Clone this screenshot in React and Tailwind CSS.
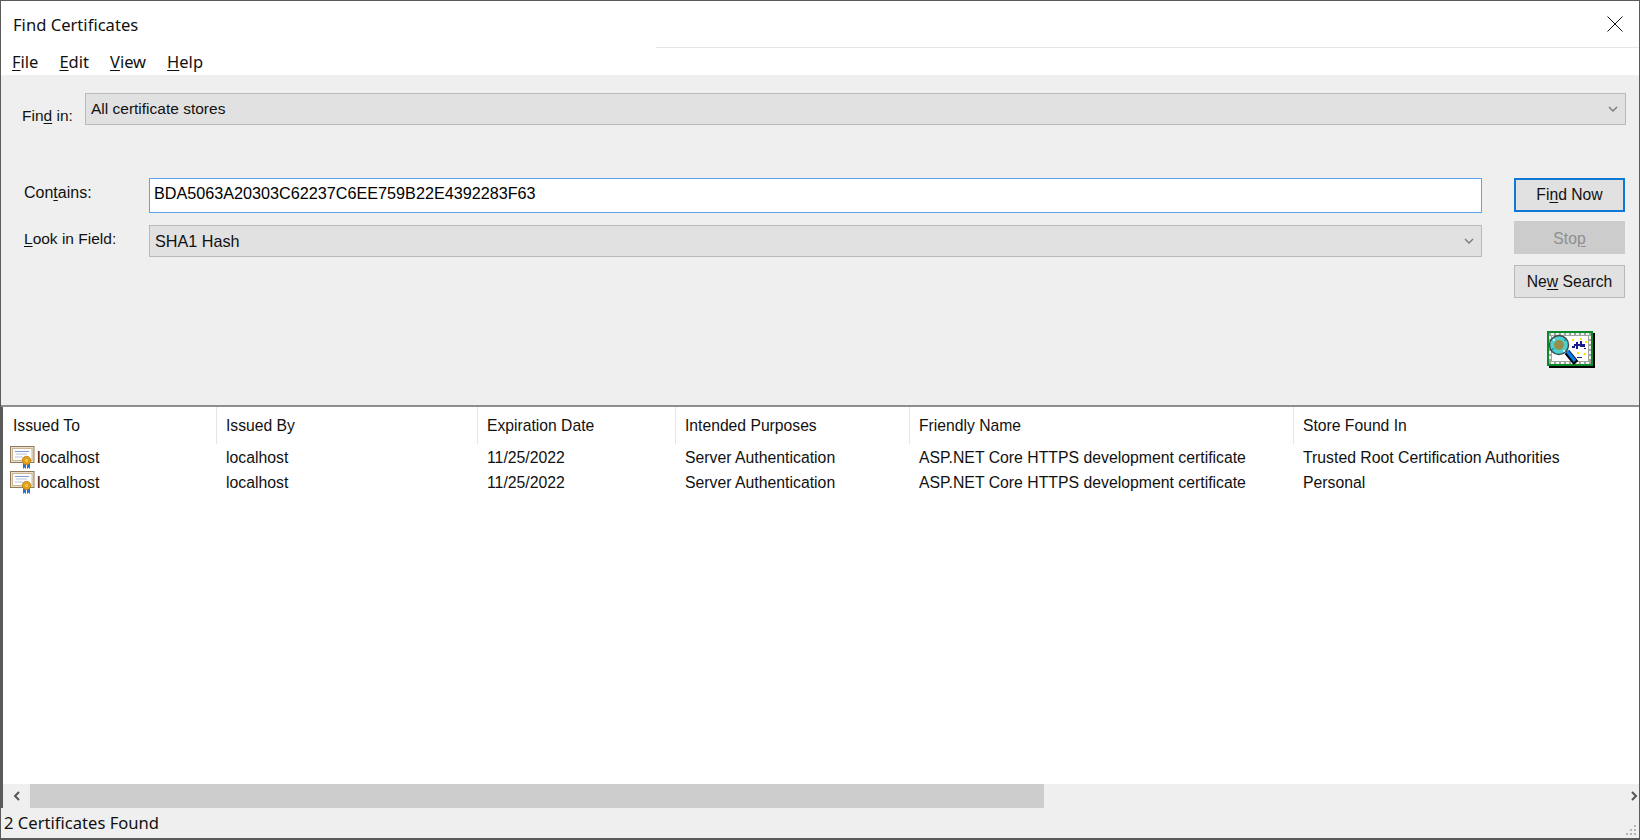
import React from "react";

const seg = "font-['Noto_Sans','Open_Sans',sans-serif]";
const ari = "font-['Liberation_Sans',Arial,sans-serif]";

function Chevron({ className }) {
  return (
    <svg width="10" height="7" viewBox="0 0 10 7" className={className} fill="none" stroke="#777" strokeWidth="1.3">
      <path d="M1 1 L5 5 L9 1" />
    </svg>
  );
}

function CertIcon() {
  return (
    <svg width="25" height="23" viewBox="0 0 25 23" className="shrink-0">
      <rect x="0.5" y="0.5" width="23.5" height="16" fill="#e9dfcc" stroke="#8f7b5c" />
      <rect x="2.5" y="2.5" width="19.5" height="12" fill="#fdfdfd" stroke="#c9b794" strokeWidth="1" />
      <path d="M5 5.5 H19" stroke="#7f9bc9" strokeWidth="1" />
      <path d="M6 8 H17" stroke="#b6c4da" strokeWidth="1" />
      <path d="M5 11 H13" stroke="#b6c4da" strokeWidth="1" />
      <path d="M13 17 h3 v6 l-1.5 -1.5 l-1.5 1.5 z M17 17 h3 v6 l-1.5 -1.5 l-1.5 1.5 z" fill="#2a6fd6" />
      <circle cx="16.5" cy="14.5" r="4.2" fill="#e3a11a" stroke="#b77f0f" strokeWidth="0.8" />
      <circle cx="16.5" cy="14.5" r="1.6" fill="#f2c64f" />
    </svg>
  );
}

function FindCertIcon() {
  const dots = [];
  for (let x = 4; x < 42; x += 5) {
    dots.push(<rect key={"t" + x} x={x} y="2" width="3" height="2" />);
    dots.push(<rect key={"b" + x} x={x} y="31" width="3" height="2" />);
  }
  for (let y = 5; y < 30; y += 5) {
    dots.push(<rect key={"l" + y} x="2" y={y} width="2" height="3" />);
    dots.push(<rect key={"r" + y} x="42" y={y} width="2" height="3" />);
  }
  return (
    <svg width="48" height="37" viewBox="0 0 48 37" shapeRendering="crispEdges">
      <rect x="2" y="2" width="46" height="35" fill="#000" />
      <rect x="0" y="0" width="46" height="35" fill="#0b8a2a" />
      <rect x="2" y="2" width="42" height="31" fill="#9ea59e" />
      <g fill="#f2f2f2">{dots}</g>
      <rect x="5" y="5" width="36" height="25" fill="#ffffff" />
      <g fill="#1a1a8f">
        <rect x="25" y="15" width="3" height="2" /><rect x="27" y="13" width="2" height="2" /><rect x="29" y="11" width="2" height="7" /><rect x="31" y="13" width="3" height="2" />
        <rect x="33" y="10" width="2" height="6" /><rect x="35" y="13" width="3" height="3" /><rect x="30" y="26" width="5" height="1" />
        <rect x="37" y="17" width="2" height="1" />
      </g>
      <g fill="#ffe000">
        <rect x="25" y="8" width="2" height="2" /><rect x="33" y="7" width="2" height="2" /><rect x="38" y="10" width="2" height="2" /><rect x="37" y="22" width="2" height="2" /><rect x="30" y="21" width="2" height="2" />
      </g>
      <g shapeRendering="auto">
        <path d="M20 21 L29 32" stroke="#000" strokeWidth="6" />
        <path d="M20 20 L28 30" stroke="#0a7cf0" strokeWidth="3.5" />
        <circle cx="12" cy="14" r="9.5" fill="#4fd0d0" stroke="#3a4a4a" strokeWidth="1.4" />
        <circle cx="12" cy="14" r="5" fill="#958f4a" />
        <circle cx="7" cy="9" r="1" fill="#e8ffff" />
        <circle cx="17" cy="20" r="1" fill="#e8ffff" />
        <circle cx="18" cy="9" r="1" fill="#139a9a" />
        <circle cx="6" cy="18" r="1" fill="#139a9a" />
      </g>
    </svg>
  );
}

function Combo({ children, className }) {
  return (
    <div className={`flex items-center justify-between bg-[#e1e1e1] border border-[#b9b9b9] ${ari} text-[#111] ${className}`}>
      <span>{children}</span>
      <Chevron className="mr-[7px]" />
    </div>
  );
}

function Btn({ children, className }) {
  return (
    <div className={`w-[111px] flex items-center justify-center ${ari} text-[15.7px] ${className}`}>{children}</div>
  );
}

const cols = "grid grid-cols-[213px_261px_198px_234px_384px_1fr]";

function Row({ last }) {
  return (
    <div className={`${cols} h-[25px] items-center ${ari} text-[15.8px] text-[#111]`}>
      <div className="flex items-center gap-[2px] pl-[7px]"><CertIcon /><span>localhost</span></div>
      <div className="pl-[10px]">localhost</div>
      <div className="pl-[10px]">11/25/2022</div>
      <div className="pl-[10px]">Server Authentication</div>
      <div className="pl-[10px] whitespace-nowrap">ASP.NET Core HTTPS development certificate</div>
      <div className="pl-[10px] whitespace-nowrap">{last}</div>
    </div>
  );
}

export default function App() {
  const heads = ["Issued To", "Issued By", "Expiration Date", "Intended Purposes", "Friendly Name", "Store Found In"];
  return (
    <div className="w-[1640px] h-[840px] flex flex-col bg-white border-t border-x border-b-2 border-[#5a5a5a] overflow-hidden">
      <div className="flex h-[47px] shrink-0">
        <div className={`w-[655px] pl-[12px] pt-[12px] ${seg} text-[16.6px] leading-[24px] text-[#111]`}>Find Certificates</div>
        <div className="flex-1 flex justify-end border-b border-[#e6e6e6]">
          <svg width="16" height="16" viewBox="0 0 16 16" className="mt-[15px] mr-[16px]" stroke="#111" strokeWidth="1" fill="none">
            <path d="M0.5 0.5 L15.5 15.5 M15.5 0.5 L0.5 15.5" />
          </svg>
        </div>
      </div>
      <div className={`flex h-[27px] shrink-0 items-start pl-[11px] pt-[3px] gap-[21px] ${seg} text-[16.5px] leading-[22px] text-[#111]`}>
        <span><span className="underline underline-offset-2">F</span>ile</span>
        <span><span className="underline underline-offset-2">E</span>dit</span>
        <span><span className="underline underline-offset-2">V</span>iew</span>
        <span><span className="underline underline-offset-2">H</span>elp</span>
      </div>
      <div className={`h-[332px] shrink-0 bg-[#efefef] border-b-2 border-[#8e8e8e] flex flex-col ${ari} text-[15.5px] text-[#111]`}>
        <div className="flex items-start mt-[18px] pl-[21px] pr-[13px]">
          <span className="w-[63px] pt-[11px]">Fin<span className="underline underline-offset-2">d</span> in:</span>
          <Combo className="flex-1 h-[32px] pl-[5px]">All certificate stores</Combo>
        </div>
        <div className="flex mt-[51px] pl-[23px] pr-[14px]">
          <div className="flex-1 flex flex-col">
            <div className="flex items-center">
              <span className="w-[125px] pb-[6px] text-[16px]">Con<span className="underline underline-offset-2">t</span>ains:</span>
              <div className="flex-1 h-[35px] bg-white border border-[#5ca4e6] flex items-center pl-[4px] pb-[5px] text-[16.2px] text-black">BDA5063A20303C62237C6EE759B22E4392283F63</div>
            </div>
            <div className="flex items-center mt-[12px]">
              <span className="w-[125px] pb-[6px]"><span className="underline underline-offset-2">L</span>ook in Field:</span>
              <Combo className="flex-1 h-[32px] pl-[5px] text-[16.2px]">SHA1 Hash</Combo>
            </div>
          </div>
          <div className="flex flex-col ml-[32px] w-[111px]">
            <Btn className="h-[34px] bg-[#e1e1e1] border-2 border-[#0f78d4]">Fi<span className="underline underline-offset-2">n</span>d Now</Btn>
            <Btn className="h-[33px] mt-[9px] bg-[#cccccc] text-[#8e8e8e] pt-[2px]">Sto<span className="underline underline-offset-2">p</span></Btn>
            <Btn className="h-[33px] mt-[11px] bg-[#e1e1e1] border border-[#b9b9b9]">Ne<span className="underline underline-offset-2">w</span>&nbsp;Search</Btn>
            <div className="mt-[33px] ml-[33px]"><FindCertIcon /></div>
          </div>
        </div>
      </div>
      <div className="flex-1 flex flex-col border-l-2 border-[#5a5a5a] min-h-0">
        <div className={`${cols} h-[38px] shrink-0 items-start ${ari} text-[15.7px] text-[#111]`}>
          {heads.map((h, i) => (
            <div key={h} className={`h-[37px] flex items-center ${i === 0 ? "pl-[10px]" : "pl-[9px] border-l border-[#e5e5e5]"}`}>{h}</div>
          ))}
        </div>
        <div className="flex-1">
          <Row last="Trusted Root Certification Authorities" />
          <Row last="Personal" />
        </div>
        <div className="flex h-[24px] shrink-0 bg-[#efefef] items-stretch">
          <div className="w-[27px] flex items-center justify-center">
            <svg width="8" height="10" viewBox="0 0 8 10" fill="none" stroke="#555" strokeWidth="2"><path d="M6 1 L2 5 L6 9" /></svg>
          </div>
          <div className="w-[1014px] bg-[#cdcdcd]" />
          <div className="flex-1 flex items-center justify-end pr-[1px]">
            <svg width="8" height="10" viewBox="0 0 8 10" fill="none" stroke="#555" strokeWidth="2"><path d="M2 1 L6 5 L2 9" /></svg>
          </div>
        </div>
      </div>
      <div className={`flex h-[30px] shrink-0 bg-[#efefef] items-center justify-between pl-[3px] ${seg} text-[16.6px] text-[#111]`}>
        <span>2 Certificates Found</span>
        <svg width="12" height="12" viewBox="0 0 12 12" className="self-end mr-[1px] mb-[1px]" fill="#b5b5b5">
          <rect x="8" y="0" width="2" height="2" /><rect x="4" y="4" width="2" height="2" /><rect x="8" y="4" width="2" height="2" />
          <rect x="0" y="8" width="2" height="2" /><rect x="4" y="8" width="2" height="2" /><rect x="8" y="8" width="2" height="2" />
        </svg>
      </div>
    </div>
  );
}
